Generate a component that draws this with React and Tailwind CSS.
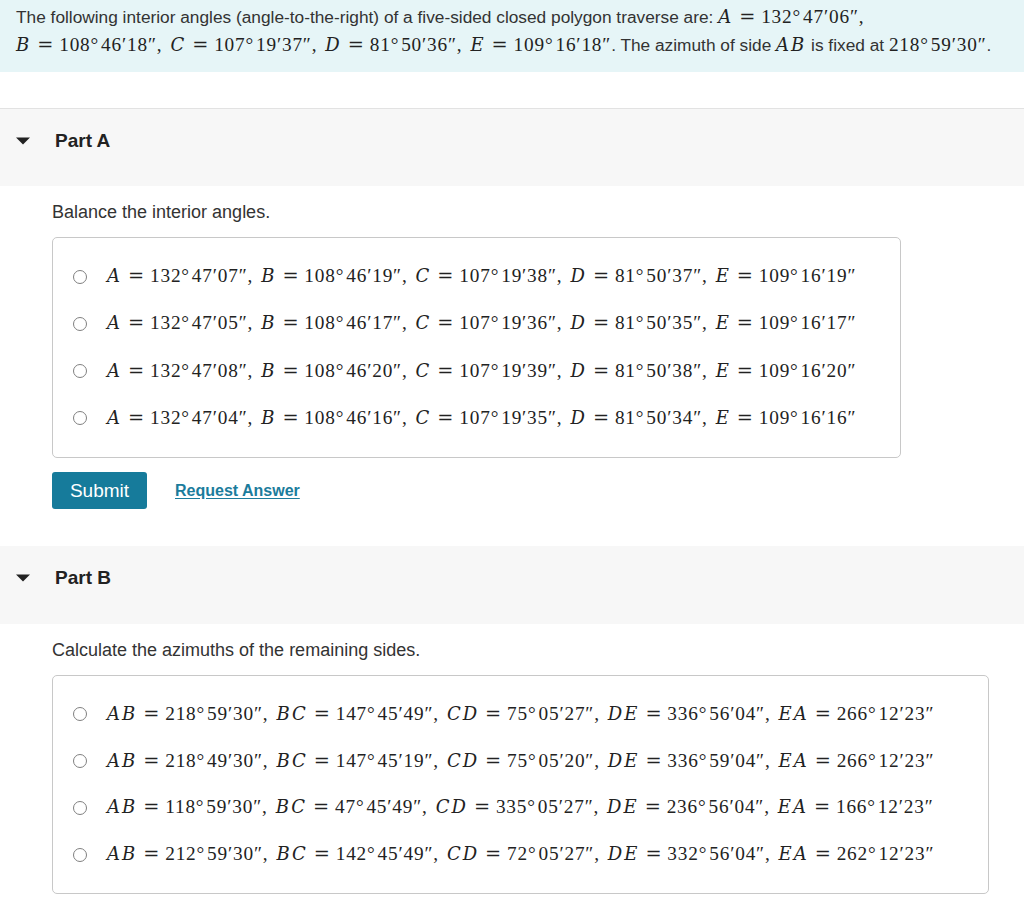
import React from "react";

const SANS = "font-['Liberation_Sans',Arial,sans-serif]";
const SERIF = "font-['Liberation_Serif','DejaVu_Serif',serif]";

function Val({ v }) {
  return (
    <>
      {v.split("").map((c, i) =>
        c === "°" ? (
          <span key={i} className="mr-[2px]">°</span>
        ) : (
          <React.Fragment key={i}>{c}</React.Fragment>
        )
      )}
    </>
  );
}

function Name({ n }) {
  return (
    <span className="font-['DejaVu_Serif',serif] italic text-[18px] tracking-[2px]">{n}</span>
  );
}

function EqSign() {
  return (
    <span className="font-['DejaVu_Serif',serif] not-italic ml-[6px] mr-[5px]">=</span>
  );
}

function Eq({ name, value }) {
  return (
    <>
      <Name n={name} />
      <EqSign />
      <Val v={value} />
    </>
  );
}

function MathList({ items, end }) {
  return (
    <span className={SERIF + " text-[19.3px] tracking-[0.8px] text-[#222] whitespace-nowrap"}>
      {items.map(([n, v], i) => (
        <React.Fragment key={i}>
          {i > 0 && <span className="mr-[8px]">,</span>}
          <Eq name={n} value={v} />
        </React.Fragment>
      ))}
      {end}
    </span>
  );
}

function M({ children }) {
  return (
    <span className={SERIF + " text-[19.3px] tracking-[0.8px] text-[#222]"}>{children}</span>
  );
}

function Triangle() {
  return (
    <svg width="14" height="8" viewBox="0 0 14 8" className="shrink-0">
      <polygon points="0,0.5 14,0.5 7,7.5" fill="#222" />
    </svg>
  );
}

function PartHeader({ label, border }) {
  return (
    <div
      className={
        "h-[78px] bg-[#f7f7f7] flex items-start pt-[20px] pl-[16px] " +
        (border ? "border-t border-[#e2e2e2]" : "")
      }
    >
      <div className="flex items-center h-[24px]">
        <Triangle />
        <span className="ml-[25px] text-[19px] font-bold text-[#222] leading-[24px]">
          {label}
        </span>
      </div>
    </div>
  );
}

function Radio() {
  return (
    <span className="w-[14px] h-[14px] rounded-full border border-[#808080] bg-white shrink-0" />
  );
}

function OptionsBox({ width, rows, rowH }) {
  return (
    <div
      className="border border-[#c8c8c8] rounded-[5px] bg-white py-[15px] pl-[20px]"
      style={{ width }}
    >
      {rows.map((r, i) => (
        <div key={i} className="flex items-center" style={{ height: rowH }}>
          <Radio />
          <span className="ml-[20px]">
            <MathList items={r} />
          </span>
        </div>
      ))}
    </div>
  );
}

const partA = [
  [["A", "132°47′07″"], ["B", "108°46′19″"], ["C", "107°19′38″"], ["D", "81°50′37″"], ["E", "109°16′19″"]],
  [["A", "132°47′05″"], ["B", "108°46′17″"], ["C", "107°19′36″"], ["D", "81°50′35″"], ["E", "109°16′17″"]],
  [["A", "132°47′08″"], ["B", "108°46′20″"], ["C", "107°19′39″"], ["D", "81°50′38″"], ["E", "109°16′20″"]],
  [["A", "132°47′04″"], ["B", "108°46′16″"], ["C", "107°19′35″"], ["D", "81°50′34″"], ["E", "109°16′16″"]],
];

const partB = [
  [["AB", "218°59′30″"], ["BC", "147°45′49″"], ["CD", "75°05′27″"], ["DE", "336°56′04″"], ["EA", "266°12′23″"]],
  [["AB", "218°49′30″"], ["BC", "147°45′19″"], ["CD", "75°05′20″"], ["DE", "336°59′04″"], ["EA", "266°12′23″"]],
  [["AB", "118°59′30″"], ["BC", "47°45′49″"], ["CD", "335°05′27″"], ["DE", "236°56′04″"], ["EA", "166°12′23″"]],
  [["AB", "212°59′30″"], ["BC", "142°45′49″"], ["CD", "72°05′27″"], ["DE", "332°56′04″"], ["EA", "262°12′23″"]],
];

export default function App() {
  return (
    <div className={SANS + " w-[1024px] min-h-[903px] bg-white text-[#333]"}>
      {/* problem statement */}
      <div className="h-[72px] overflow-hidden bg-[#e6f5f7] pt-[3px] pl-[16px] pr-[8px] text-[17.3px] leading-[28px]">
        <div className="h-[28px] whitespace-nowrap">
          The following interior angles (angle-to-the-right) of a five-sided closed polygon traverse are:{" "}
          <MathList items={[["A", "132°47′06″"]]} end="," />
        </div>
        <div className="h-[28px] whitespace-nowrap">
          <MathList
            items={[
              ["B", "108°46′18″"],
              ["C", "107°19′37″"],
              ["D", "81°50′36″"],
              ["E", "109°16′18″"],
            ]}
          />
          . The azimuth of side <M><Name n="AB" /></M> is fixed at{" "}
          <M><Val v="218°59′30″" /></M>.
        </div>
      </div>

      <div className="h-[36px]" />

      {/* Part A */}
      <PartHeader label="Part A" border />
      <div className="pl-[52px] pt-[14px]">
        <div className="leading-[24px] text-[18px] text-[#333]">Balance the interior angles.</div>
        <div className="mt-[13px]">
          <OptionsBox width={849} rows={partA} rowH={47.25} />
        </div>
        <div className="mt-[14px] flex items-center">
          <button className="w-[95px] h-[37px] rounded-[3px] bg-[#167b9b] text-white text-[19px] leading-none">
            Submit
          </button>
          <a className="ml-[28px] text-[16px] font-bold text-[#1b7c9c] underline underline-offset-2 cursor-pointer">
            Request Answer
          </a>
        </div>
      </div>

      <div className="h-[37px]" />

      {/* Part B */}
      <PartHeader label="Part B" />
      <div className="pl-[52px] pt-[14px] pb-[9px]">
        <div className="leading-[24px] text-[18px] text-[#333]">
          Calculate the azimuths of the remaining sides.
        </div>
        <div className="mt-[13px]">
          <OptionsBox width={937} rows={partB} rowH={46.75} />
        </div>
      </div>
    </div>
  );
}
